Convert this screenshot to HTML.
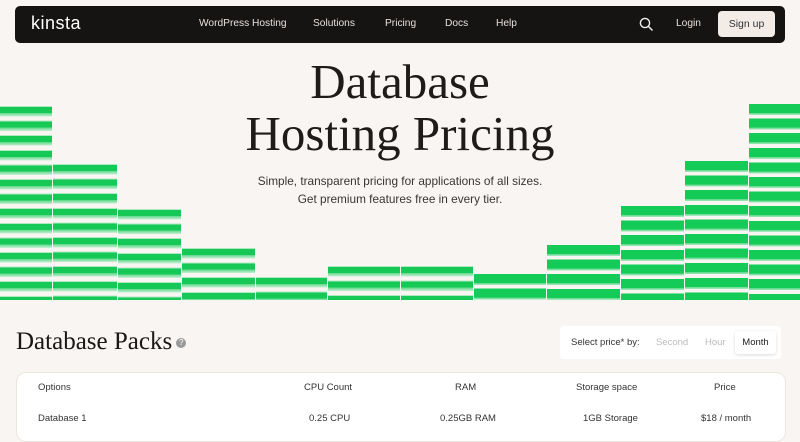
<!DOCTYPE html>
<html><head><meta charset="utf-8"><style>
*{margin:0;padding:0;box-sizing:border-box}
body{width:800px;height:430px;overflow:hidden;background:#f8f5f2;font-family:"Liberation Sans",sans-serif;position:relative}
.nav{position:absolute;left:15px;top:6px;width:770px;height:37px;background:#161313;border-radius:5px;color:#e6e1dc;font-size:10.2px}
.nav span{position:absolute;top:12px}
.logo{position:absolute;left:16px;top:7px;font-size:18px;color:#fff;letter-spacing:.5px}
.sign{position:absolute;left:703px;top:5px;width:57px;height:26px;background:#f3ece6;border-radius:4px;color:#333;font-size:10.5px;text-align:center;line-height:26px}
.col{position:absolute;bottom:130px}
.L{background:repeating-linear-gradient(to bottom,#aee9c2 0,#aee9c2 1px,#16c956 1px,#16c956 7px,#5fd98a 7px,#c9f0d6 10.5px,transparent 10.5px,transparent 14.6px)}
.R{background:repeating-linear-gradient(to bottom,#14cb58 0,#14cb58 9px,#5cd988 9px,#a9e9c0 11px,transparent 11px,transparent 14.6px)}
h1{position:absolute;left:0;width:800px;text-align:center;font-family:"Liberation Serif",serif;font-weight:normal;color:#1f1b1b;font-size:49px;line-height:52px;top:56px}
.sub{position:absolute;left:0;width:800px;text-align:center;top:173px;font-size:11.8px;line-height:17.5px;color:#3a3533}
.dp{position:absolute;left:16px;top:328px;font-family:"Liberation Serif",serif;font-size:25px;color:#1a1717}
.q{display:inline-block;width:10px;height:10px;border-radius:50%;background:#999;color:#fff;font-size:8px;text-align:center;line-height:10px;vertical-align:middle;font-family:"Liberation Sans",sans-serif;margin-left:4px}
.tog{position:absolute;left:560px;top:326px;width:221px;height:33px;background:#fff;border-radius:3px;font-size:9.5px}
.tog span{position:absolute;top:11px}
.card{position:absolute;left:16px;top:372px;width:770px;height:70px;background:#fff;border-radius:10px;border:1px solid #ece6e0;font-size:9.5px;color:#333}
.card span{position:absolute}
</style></head><body>
<div class="nav"><div class="logo">kinsta</div>
<span style="left:184px">WordPress Hosting</span><span style="left:298px">Solutions</span><span style="left:370px">Pricing</span><span style="left:430px">Docs</span><span style="left:481px">Help</span>
<svg style="position:absolute;left:624px;top:11px" width="15" height="15" viewBox="0 0 15 15"><circle cx="6" cy="6" r="4.6" fill="none" stroke="#eee" stroke-width="1.4"/><path d="M9.5 9.5L13.5 13.5" stroke="#eee" stroke-width="1.5"/></svg>
<span style="left:661px">Login</span><div class="sign">Sign up</div></div>

<div class="col L" style="left:0;width:52px;top:106px"></div>
<div class="col L" style="left:53px;width:64px;top:164px"></div>
<div class="col L" style="left:118px;width:63px;top:209px"></div>
<div class="col L" style="left:182px;width:73px;top:248px"></div>
<div class="col L" style="left:256px;width:71px;top:277px"></div>
<div class="col L" style="left:328px;width:72px;top:266px"></div>
<div class="col L" style="left:401px;width:72px;top:266px"></div>
<div class="col R" style="left:474px;width:72px;top:274px"></div>
<div class="col R" style="left:547px;width:73px;top:245px"></div>
<div class="col R" style="left:621px;width:63px;top:206px"></div>
<div class="col R" style="left:685px;width:63px;top:161px"></div>
<div class="col R" style="left:749px;width:51px;top:104px"></div>

<h1>Database<br>Hosting Pricing</h1>
<div class="sub">Simple, transparent pricing for applications of all sizes.<br>Get premium features free in every tier.</div>

<div class="dp">Database Packs<span class="q">?</span></div>
<div class="tog"><span style="left:11px;color:#333">Select price* by:</span><span style="left:96px;color:#bbb">Second</span><span style="left:145px;color:#bbb">Hour</span>
<div style="position:absolute;left:175px;top:5px;width:41px;height:23px;border-radius:3px;box-shadow:0 1px 3px rgba(0,0,0,.15);text-align:center;line-height:23px;color:#222">Month</div></div>

<div class="card">
<span style="left:21px;top:9px">Options</span><span style="left:287px;top:9px">CPU Count</span><span style="left:438px;top:9px">RAM</span><span style="left:559px;top:9px">Storage space</span><span style="left:697px;top:9px">Price</span>
<span style="left:21px;top:40px">Database 1</span><span style="left:292px;top:40px">0.25 CPU</span><span style="left:423px;top:40px">0.25GB RAM</span><span style="left:566px;top:40px">1GB Storage</span><span style="left:684px;top:40px">$18 / month</span>
</div>
</body></html>
